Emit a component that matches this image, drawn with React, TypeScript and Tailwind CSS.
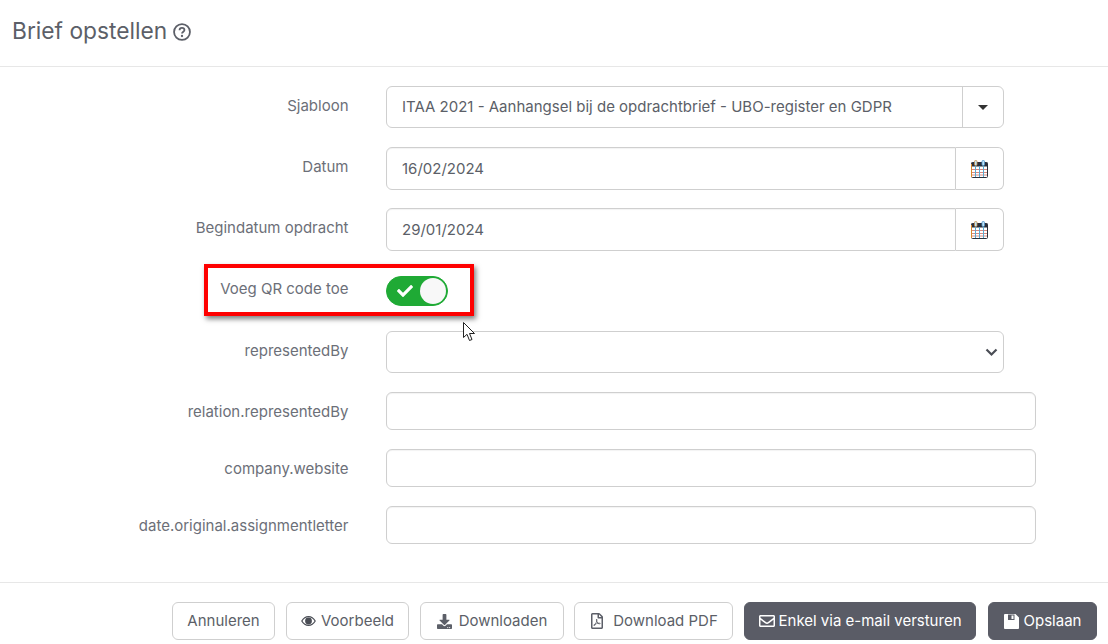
import { FaCheck, FaDownload, FaRegEnvelope, FaRegFilePdf } from "react-icons/fa";

function CalendarIcon() {
  return (
    <svg width="17" height="18" viewBox="0 0 17 18">
      <rect x="0.5" y="2.5" width="16" height="15" rx="1" fill="#fff" stroke="#2a2f3a" />
      <rect x="0.5" y="2.5" width="16" height="4" fill="#2a2f3a" />
      <path d="M1 9.5H16M1 12.5H16M1 15H16" stroke="#d8887f" strokeWidth="1" />
      <path d="M4.5 6V17M8.5 6V17M12.5 6V17" stroke="#5aa9d0" strokeWidth="1" />
      <path d="M0.5 4V17" stroke="#d98a2b" strokeWidth="1" />
      <rect x="3.5" y="0.5" width="2.5" height="5" rx="1" fill="#bfe3f5" stroke="#c98f4a" strokeWidth="0.8" />
      <rect x="11" y="0.5" width="2.5" height="5" rx="1" fill="#bfe3f5" stroke="#4a8fc9" strokeWidth="0.8" />
    </svg>
  );
}

function EyeIcon() {
  return (
    <svg width="15" height="12" viewBox="0 0 15 12" fill="none">
      <path d="M0.8 6C2.4 3.2 4.8 1.6 7.5 1.6C10.2 1.6 12.6 3.2 14.2 6C12.6 8.8 10.2 10.4 7.5 10.4C4.8 10.4 2.4 8.8 0.8 6Z" stroke="#4a4d55" strokeWidth="1.2" />
      <circle cx="7.5" cy="6" r="3.4" fill="#4a4d55" />
    </svg>
  );
}

function SaveIcon() {
  return (
    <svg width="15" height="15" viewBox="0 0 15 15">
      <path fillRule="evenodd" d="M0 1C0 0.5 0.5 0 1 0H11.5L15 3.5V14C15 14.5 14.5 15 14 15H1C0.5 15 0 14.5 0 14ZM4 0.5V6H10.5V0.5ZM7.5 1.5H9.5V5H7.5Z" fill="#fff" />
    </svg>
  );
}

function Row({ label, height, mt, children, labelPt = "pt-[10px]" }: { label: string; height: string; mt: string; children: React.ReactNode; labelPt?: string }) {
  return (
    <div className={`flex items-start ${mt} ${height}`}>
      <label className={`w-[348.5px] shrink-0 text-right text-[15px] leading-[20px] text-[#6c6f78] ${labelPt}`}>{label}</label>
      <div className="ml-[37.5px]">{children}</div>
    </div>
  );
}

function DateInput({ value }: { value: string }) {
  return (
    <div className="flex h-[43px] w-[618px]">
      <div className="flex w-[570px] items-center rounded-l-[6px] border border-[#cfcfcf] pl-[15px] pt-[1px] text-[15px] text-[#5c5f68] shadow-[inset_0_1px_1px_rgba(0,0,0,0.05)]">
        {value}
      </div>
      <div className="flex w-[48px] items-center justify-center rounded-r-[6px] border border-l-0 border-[#cfcfcf]">
        <CalendarIcon />
      </div>
    </div>
  );
}

function TextInput() {
  return <div className="h-[38px] w-[650px] rounded-[6px] border border-[#cfcfcf] shadow-[inset_0_1px_1px_rgba(0,0,0,0.05)]" />;
}

function Button({ children, dark, className }: { children: React.ReactNode; dark?: boolean; className: string }) {
  const colors = dark ? "bg-[#5a5c66] border-[#5a5c66] text-white" : "bg-white border-[#cfcfcf] text-[#5c5f68]";
  return (
    <button className={`flex h-[38px] shrink-0 items-center justify-center rounded-[6px] border text-[15px] ${colors} ${className}`}>
      {children}
    </button>
  );
}

export default function App() {
  return (
    <div className="relative h-[644px] w-[1108px] overflow-hidden bg-white font-['Inter',sans-serif]">
      <div className="flex h-[67px] items-center border-b border-[#e7e7e7] pl-[12px] pb-[4px]">
        <h1 className="text-[22.75px] font-normal text-[#5c5f68]">Brief opstellen</h1>
        <svg className="ml-[6px] mt-[1px]" width="18" height="18" viewBox="0 0 17 17" fill="none">
          <circle cx="8.5" cy="8.5" r="7.5" stroke="#5c5f68" strokeWidth="1.7" />
          <path d="M6.2 6.8C6.2 5.5 7.2 4.6 8.5 4.6C9.8 4.6 10.8 5.4 10.8 6.6C10.8 8.2 8.5 8.2 8.5 10" stroke="#5c5f68" strokeWidth="1.7" />
          <circle cx="8.5" cy="12.3" r="1.1" fill="#5c5f68" />
        </svg>
      </div>

      <Row label="Sjabloon" height="h-[42px]" mt="mt-[19px]">
        <div className="flex h-[42px] w-[618px] rounded-[6px] border border-[#cfcfcf] text-[15px] text-[#5c5f68]">
          <div className="flex flex-1 items-center pl-[15px]">ITAA 2021 - Aanhangsel bij de opdrachtbrief - UBO-register en GDPR</div>
          <div className="flex w-[41px] items-center justify-center border-l border-[#cfcfcf]">
            <span className="h-0 w-0 border-x-[5px] border-t-[5px] border-x-transparent border-t-[#333]" />
          </div>
        </div>
      </Row>
      <Row label="Datum" height="h-[43px]" mt="mt-[19px]">
        <DateInput value="16/02/2024" />
      </Row>
      <Row label="Begindatum opdracht" height="h-[43px]" mt="mt-[18px]">
        <DateInput value="29/01/2024" />
      </Row>
      <Row label="Voeg QR code toe" height="h-[30px]" mt="mt-[25px]" labelPt="pt-[3px]">
        <div className="flex h-[30px] w-[62px] items-center justify-between rounded-full border border-[#1faa35] bg-[#1faa35] pl-[10px] pr-[1px]">
          <FaCheck className="text-[16px] text-white" />
          <span className="h-[26px] w-[26px] rounded-full bg-[#f8f8f8]" />
        </div>
      </Row>
      <Row label="representedBy" height="h-[42px]" mt="mt-[25px]">
        <div className="flex h-[42px] w-[618px] items-center justify-end rounded-[6px] border border-[#cfcfcf] pr-[4px]">
          <svg width="14" height="10" viewBox="0 0 14 10" fill="none">
            <path d="M1.5 2.5L6.5 7.5L11.5 2.5" stroke="#4a4d55" strokeWidth="2.2" />
          </svg>
        </div>
      </Row>
      <Row label="relation.representedBy" height="h-[38px]" mt="mt-[19px]">
        <TextInput />
      </Row>
      <Row label="company.website" height="h-[38px]" mt="mt-[19px]">
        <TextInput />
      </Row>
      <Row label="date.original.assignmentletter" height="h-[38px]" mt="mt-[19px]">
        <TextInput />
      </Row>

      <div className="mt-[38px] flex justify-end gap-[11px] border-t border-[#e7e7e7] pt-[19px] pr-[11px]">
        <Button className="w-[103px]">Annuleren</Button>
        <Button className="w-[123px] gap-[5px]">
          <EyeIcon />
          Voorbeeld
        </Button>
        <Button className="mr-[-1px] w-[144px] gap-[7px]">
          <FaDownload className="text-[15px]" />
          Downloaden
        </Button>
        <Button className="w-[159px] gap-[8px]">
          <FaRegFilePdf className="text-[16px]" />
          Download PDF
        </Button>
        <Button dark className="mr-[1px] w-[232px] gap-[4px]">
          <FaRegEnvelope className="text-[16px]" />
          Enkel via e-mail versturen
        </Button>
        <Button dark className="w-[109px] gap-[5px]">
          <SaveIcon />
          Opslaan
        </Button>
      </div>

      <div className="absolute left-[204px] top-[264px] h-[52px] w-[270px] border-[4px] border-[#fe0000] shadow-[2px_3px_5px_rgba(0,0,0,0.5)]" />
      <svg className="absolute left-[463px] top-[322px]" width="13" height="20" viewBox="0 0 13 20">
        <path d="M0.5 0.5V15.5L4 12.3L6.5 18.5L9 17.5L6.5 11.5H11.5Z" fill="#fff" stroke="#222" strokeWidth="1" />
      </svg>
    </div>
  );
}
